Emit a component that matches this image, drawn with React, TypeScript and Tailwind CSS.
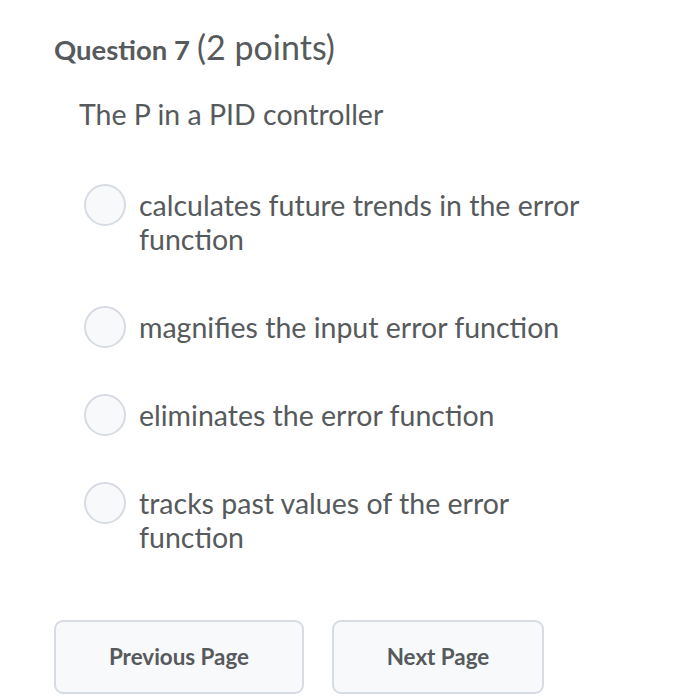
const options = [
  'calculates future trends in the error function',
  'magnifies the input error function',
  'eliminates the error function',
  'tracks past values of the error function',
]

function Radio() {
  return (
    <span className="my-[-4px] block h-[42px] w-[42px] shrink-0 rounded-full border-2 border-[#d7dbe3] bg-[#f8f9fb]" />
  )
}

export default function App() {
  return (
    <div
      className="h-[700px] w-[700px] bg-white text-[#565a5c]"
      style={{ fontFamily: 'Lato, "Open Sans", sans-serif' }}
    >
      <div className="pl-[54px] pt-[30px]">
        <h1 className="flex items-baseline gap-[7px] leading-none">
          <span className="text-[27.5px] font-bold">Question 7</span>
          <span className="text-[34px]">(2 points)</span>
        </h1>
        <p className="mt-[36px] pl-[25px] text-[28.5px] leading-none">The P in a PID controller</p>

        <div className="mt-[59px] flex flex-col gap-[54px] pl-[30px]">
          {options.map((text) => (
            <label key={text} className="flex items-start gap-[13px]">
              <Radio />
              <span className="w-[460px] text-[28.5px] leading-[34px]">{text}</span>
            </label>
          ))}
        </div>

        <div className="mt-[66px] flex gap-[28px]">
          <button className="h-[74px] w-[250px] rounded-[9px] border-2 border-[#d7dbe3] bg-[#f8f9fb] text-[22.4px] font-bold text-[#565a5c]">
            Previous Page
          </button>
          <button className="h-[74px] w-[212px] rounded-[9px] border-2 border-[#d7dbe3] bg-[#f8f9fb] text-[22.4px] font-bold text-[#565a5c]">
            Next Page
          </button>
        </div>
      </div>
    </div>
  )
}
